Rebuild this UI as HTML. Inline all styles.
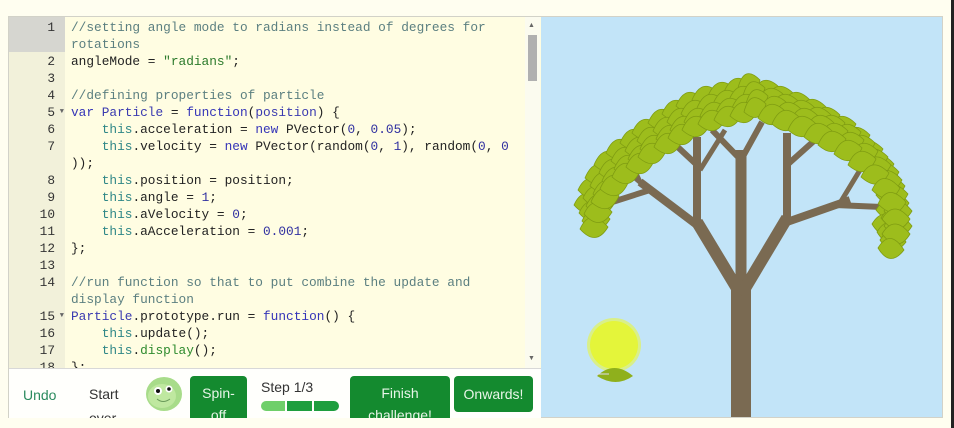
<!DOCTYPE html>
<html><head><meta charset="utf-8"><style>
body{margin:0;width:954px;height:428px;background:#fffef0;position:relative;overflow:hidden;font-family:"Liberation Sans",sans-serif}
#wrap{position:absolute;left:8px;top:16px;width:933px;height:400px;border:1px solid #d2d2c8;background:#fffde2}
#gutter{position:absolute;left:0;top:0;width:56px;height:351px;background:#f2f1da}
#hl{position:absolute;left:0;top:0;width:56px;height:35px;background:#d6d6d0}
#code{position:absolute;left:0;top:2px;width:516px;height:349px;overflow:hidden;font-family:"Liberation Mono",monospace;font-size:12.8px;line-height:17px;color:#222}
.l{display:flex}
.n{width:46px;text-align:right;color:#333;flex:none;position:relative}
.t{padding-left:16px;white-space:pre}
.f{position:absolute;right:-9px;top:0;font-size:7px;color:#666}
.c{color:#5b7f80}.k{color:#3535b8}.th{color:#2f8787}.s{color:#2b7a2b}.nm{color:#3030a0}.fn{color:#3a3ab0}.dg{color:#2e8b2e}
#sb{position:absolute;left:516px;top:0;width:15px;height:351px;background:#fbfbef}
#thumb{position:absolute;left:3px;top:18px;width:9px;height:46px;background:#b0b0b0}
#bar{position:absolute;left:0;top:351px;width:532px;height:49px;background:#fffffc;border-top:1px solid #d8d8d8;overflow:hidden}
.btn{position:absolute;background:#148a2f;color:#e8f5e8;border-radius:4px;text-align:center;font-size:14px;line-height:22px}
#canvas{position:absolute;left:532px;top:0;width:401px;height:400px;background:#c2e4f8;overflow:hidden}
</style></head><body>
<div style="position:absolute;right:0;top:0;width:3px;height:428px;background:#222"></div>
<div id="wrap">
<div id="gutter"><div id="hl"></div></div>
<div id="code">
<div class="l"><div class="n">1</div><div class="t c">//setting angle mode to radians instead of degrees for
rotations</div></div>
<div class="l"><div class="n">2</div><div class="t">angleMode = <span class="s">"radians"</span>;</div></div>
<div class="l"><div class="n">3</div><div class="t"> </div></div>
<div class="l"><div class="n">4</div><div class="t c">//defining properties of particle</div></div>
<div class="l"><div class="n">5<span class="f">▼</span></div><div class="t"><span class="k">var</span> <span class="fn">Particle</span> = <span class="k">function</span>(<span class="fn">position</span>) {</div></div>
<div class="l"><div class="n">6</div><div class="t">    <span class="th">this</span>.acceleration = <span class="k">new</span> PVector(<span class="nm">0</span>, <span class="nm">0.05</span>);</div></div>
<div class="l"><div class="n">7</div><div class="t">    <span class="th">this</span>.velocity = <span class="k">new</span> PVector(random(<span class="nm">0</span>, <span class="nm">1</span>), random(<span class="nm">0</span>, <span class="nm">0</span>
));</div></div>
<div class="l"><div class="n">8</div><div class="t">    <span class="th">this</span>.position = position;</div></div>
<div class="l"><div class="n">9</div><div class="t">    <span class="th">this</span>.angle = <span class="nm">1</span>;</div></div>
<div class="l"><div class="n">10</div><div class="t">    <span class="th">this</span>.aVelocity = <span class="nm">0</span>;</div></div>
<div class="l"><div class="n">11</div><div class="t">    <span class="th">this</span>.aAcceleration = <span class="nm">0.001</span>;</div></div>
<div class="l"><div class="n">12</div><div class="t">};</div></div>
<div class="l"><div class="n">13</div><div class="t"> </div></div>
<div class="l"><div class="n">14</div><div class="t c">//run function so that to put combine the update and
display function</div></div>
<div class="l"><div class="n">15<span class="f">▼</span></div><div class="t"><span class="fn">Particle</span>.prototype.run = <span class="k">function</span>() {</div></div>
<div class="l"><div class="n">16</div><div class="t">    <span class="th">this</span>.update();</div></div>
<div class="l"><div class="n">17</div><div class="t">    <span class="th">this</span>.<span class="dg">display</span>();</div></div>
<div class="l"><div class="n">18</div><div class="t">};</div></div>
</div>
<div id="sb"><div style="position:absolute;left:3px;top:5px;font-size:7px;color:#666">▲</div><div id="thumb"></div><div style="position:absolute;left:3px;top:338px;font-size:7px;color:#666">▼</div></div>
<div id="bar">
<div style="position:absolute;left:14px;top:18px;color:#2a8a5e;font-size:14px">Undo</div>
<div style="position:absolute;left:80px;top:13px;color:#333;font-size:14px;line-height:24px">Start<br>over</div>
<svg style="position:absolute;left:136px;top:6px" width="40" height="38"><ellipse cx="19" cy="19" rx="18" ry="17" fill="#a8dc8a"/><ellipse cx="17" cy="21" rx="14" ry="12" fill="#bfe8a0"/><circle cx="13" cy="16" r="4" fill="#fff"/><circle cx="13" cy="16" r="2" fill="#111"/><circle cx="24" cy="14" r="3.5" fill="#fff"/><circle cx="24" cy="14" r="1.8" fill="#111"/><path d="M12 24 Q18 29 25 24" stroke="#6a9a5a" fill="none"/></svg>
<div class="btn" style="left:181px;top:7px;width:57px;height:50px;padding-top:6px;box-sizing:border-box">Spin-<br>off</div>
<div style="position:absolute;left:252px;top:10px;color:#333;font-size:14px">Step 1/3</div>
<div style="position:absolute;left:252px;top:32px;width:24px;height:10px;background:#6fcf6a;border-radius:5px 0 0 5px"></div>
<div style="position:absolute;left:278px;top:32px;width:25px;height:10px;background:#1e9e3e"></div>
<div style="position:absolute;left:305px;top:32px;width:25px;height:10px;background:#1e9e3e;border-radius:0 5px 5px 0"></div>
<div class="btn" style="left:341px;top:7px;width:100px;height:50px;padding-top:6px;box-sizing:border-box">Finish<br>challenge!</div>
<div class="btn" style="left:445px;top:7px;width:79px;height:36px;line-height:36px">Onwards!</div>
</div>
<div id="canvas">
<svg width="401" height="400" viewBox="541 17 401 400">
<g stroke="#7a6a52" stroke-linecap="butt" fill="none">
<path d="M741 417 L741 290" stroke-width="20"/>
<path d="M741 295 L741 150" stroke-width="11"/>
<path d="M741 295 L697 222" stroke-width="12"/>
<path d="M741 295 L787 218" stroke-width="12"/>
<path d="M697 222 L697 137" stroke-width="8"/>
<path d="M697 225 L640 182" stroke-width="8"/>
<path d="M650 190 L603 205" stroke-width="6"/>
<path d="M655 195 L620 165" stroke-width="5"/>
<path d="M697 165 L667 137" stroke-width="6"/>
<path d="M700 170 L725 130" stroke-width="5"/>
<path d="M787 218 L787 133" stroke-width="8"/>
<path d="M787 222 L850 200" stroke-width="8"/>
<path d="M835 205 L882 207" stroke-width="6"/>
<path d="M840 203 L860 170" stroke-width="5"/>
<path d="M787 165 L815 140" stroke-width="6"/>
<path d="M741 160 L712 130" stroke-width="6"/>
<path d="M741 160 L762 122" stroke-width="6"/>
<path d="M640 182 L625 150" stroke-width="5"/>
</g>
<g fill="#9dbd1c" stroke="#7f9c12" stroke-width="0.8">
<g id="lv">
<path d="M574 205 q10 -22 28 -2 q-12 20 -28 2z"/><path d="M578 190 q10 -22 28 -2 q-12 20 -28 2z"/><path d="M585 178 q10 -24 28 -6 q-10 22 -28 6z"/>
<path d="M594 165 q10 -24 28 -6 q-10 22 -28 6z"/><path d="M606 153 q10 -24 28 -6 q-10 22 -28 6z"/><path d="M620 143 q10 -24 28 -6 q-10 22 -28 6z"/>
<path d="M632 133 q10 -24 28 -6 q-10 22 -28 6z"/><path d="M648 123 q10 -24 28 -6 q-10 22 -28 6z"/><path d="M662 114 q10 -24 28 -6 q-10 22 -28 6z"/>
<path d="M676 106 q10 -24 28 -6 q-10 22 -28 6z"/><path d="M692 100 q10 -24 28 -6 q-10 22 -28 6z"/><path d="M708 96 q10 -24 28 -6 q-10 22 -28 6z"/>
<path d="M724 92 q10 -24 28 -6 q-10 22 -28 6z"/><path d="M738 88 q6 -24 22 -8 q-6 22 -22 8z"/><path d="M752 94 q10 -24 28 -6 q-10 22 -28 6z"/>
<path d="M766 100 q10 -24 28 -6 q-10 22 -28 6z"/><path d="M782 106 q10 -24 28 -6 q-10 22 -28 6z"/><path d="M798 113 q10 -24 28 -6 q-10 22 -28 6z"/>
<path d="M812 121 q10 -24 28 -6 q-10 22 -28 6z"/><path d="M828 130 q10 -24 28 -6 q-10 22 -28 6z"/><path d="M842 141 q10 -24 28 -6 q-10 22 -28 6z"/>
<path d="M855 153 q10 -22 28 -4 q-10 20 -28 4z"/><path d="M866 166 q10 -22 28 -2 q-10 20 -28 2z"/><path d="M872 180 q10 -22 28 -2 q-10 20 -28 2z"/>
<path d="M876 195 q12 -20 28 0 q-12 20 -28 0z"/><path d="M876 210 q12 -20 28 0 q-12 20 -28 0z"/><path d="M872 224 q12 -20 26 2 q-14 18 -26 -2z"/>
</g>
<use href="#lv" transform="translate(5 8)"/>
<use href="#lv" transform="translate(8 16)"/>
<use href="#lv" transform="translate(6 24)"/>
</g>
<circle cx="614" cy="345" r="27" fill="#e8f640" opacity="0.6"/>
<circle cx="614" cy="345" r="24" fill="#e4f532" opacity="0.9"/>
<path d="M597 376 q17 -16 36 0 q-17 12 -36 0z" fill="#8fb01c"/>
<path d="M597 374 l12 0" stroke="#dde" stroke-width="1"/>
</svg>
</div>
</div>
</body></html>
